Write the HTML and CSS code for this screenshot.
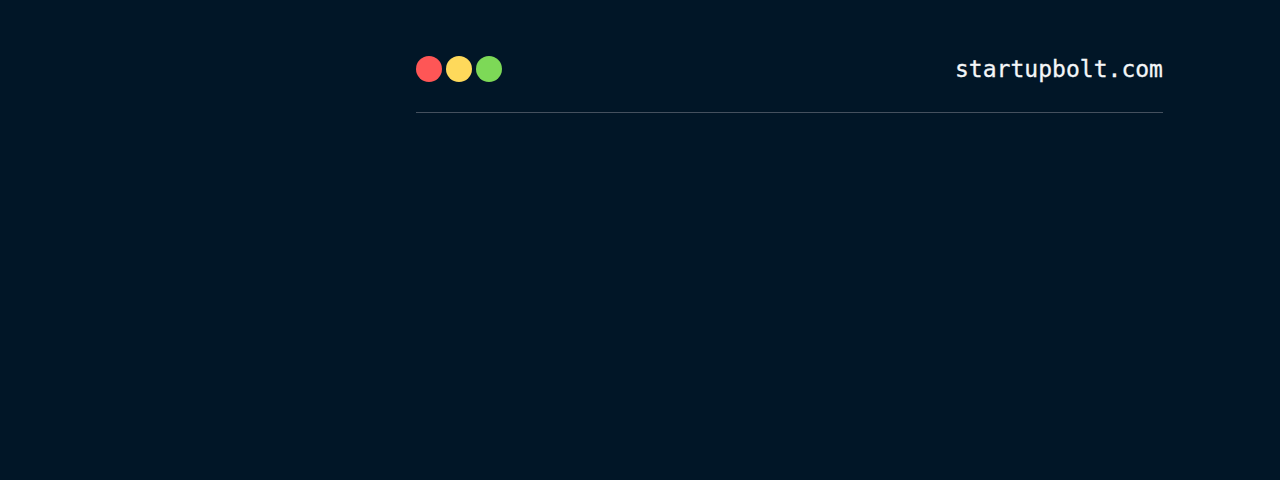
FILE: index.html
```html
<!DOCTYPE html>
<html lang="en">
<head>
<meta charset="utf-8">
<title>startupbolt.com</title>
<link rel="stylesheet" href="styles.css">
</head>
<body>
<div class="page">
  <aside class="side"></aside>
  <main class="window">
    <header class="titlebar">
      <div class="dots">
        <span class="dot dot-red"></span>
        <span class="dot dot-yellow"></span>
        <span class="dot dot-green"></span>
      </div>
      <div class="domain">startupbolt.com</div>
    </header>
    <section class="content"></section>
  </main>
</div>
</body>
</html>
```
FILE: styles.css
```css
html, body {
  margin: 0;
  padding: 0;
  background: #011627;
  height: 100%;
}
.page {
  display: grid;
  grid-template-columns: 416px 747px 1fr;
  height: 480px;
  padding-top: 56px;
  box-sizing: border-box;
}
.titlebar {
  display: flex;
  align-items: center;
  justify-content: space-between;
  height: 26px;
  padding-bottom: 30px;
  border-bottom: 1px solid #44505e;
}
.dots {
  display: flex;
  gap: 4px;
}
.dot {
  width: 26px;
  height: 26px;
  border-radius: 50%;
  display: block;
}
.dot-red { background: #fe5656; }
.dot-yellow { background: #fed95b; }
.dot-green { background: #7dd957; }
.domain {
  font-family: "DejaVu Sans Mono", "Liberation Mono", monospace;
  font-size: 23px;
  color: #f4f6f8;
  -webkit-text-stroke: 0.3px #f4f6f8;
  margin-right: 0;
  letter-spacing: 0.02px;
}
```
